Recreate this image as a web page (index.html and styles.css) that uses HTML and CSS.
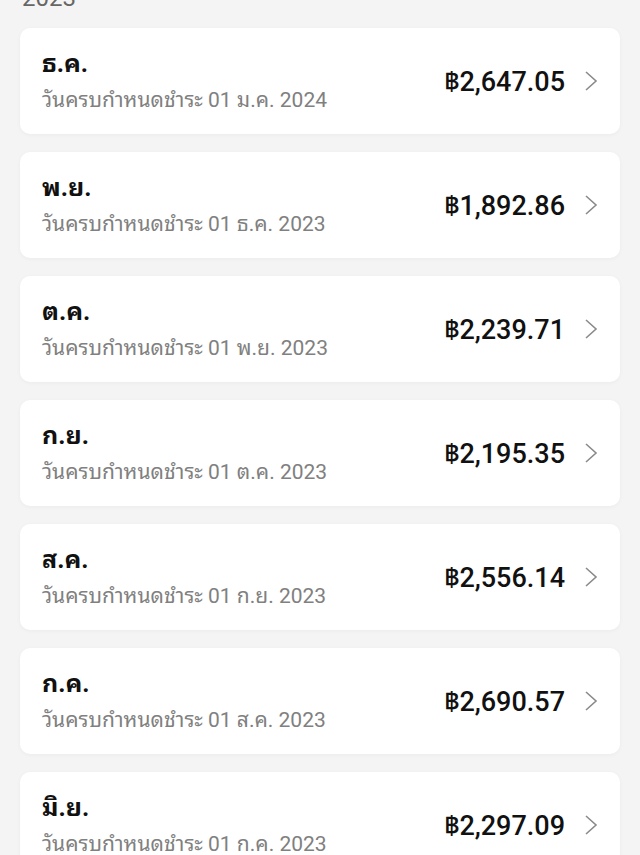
FILE: index.html
```html
<!DOCTYPE html>
<html lang="th">
<head>
<meta charset="utf-8">
<link rel="stylesheet" href="styles.css">
</head>
<body>
<div class="page">
  <div class="year">2023</div>
  <div class="list">
    <div class="card">
      <div class="info"><div class="month">ธ.ค.</div><div class="due">วันครบกำหนดชำระ 01 ม.ค. 2024</div></div>
      <div class="amount">฿2,647.05</div>
      <svg class="chev" viewBox="0 0 14 22" width="14" height="22"><path d="M2 2 L12 11 L2 20" fill="none" stroke="#8a8a8a" stroke-width="1.6"/></svg>
    </div>
    <div class="card">
      <div class="info"><div class="month">พ.ย.</div><div class="due">วันครบกำหนดชำระ 01 ธ.ค. 2023</div></div>
      <div class="amount">฿1,892.86</div>
      <svg class="chev" viewBox="0 0 14 22" width="14" height="22"><path d="M2 2 L12 11 L2 20" fill="none" stroke="#8a8a8a" stroke-width="1.6"/></svg>
    </div>
    <div class="card">
      <div class="info"><div class="month">ต.ค.</div><div class="due">วันครบกำหนดชำระ 01 พ.ย. 2023</div></div>
      <div class="amount">฿2,239.71</div>
      <svg class="chev" viewBox="0 0 14 22" width="14" height="22"><path d="M2 2 L12 11 L2 20" fill="none" stroke="#8a8a8a" stroke-width="1.6"/></svg>
    </div>
    <div class="card">
      <div class="info"><div class="month">ก.ย.</div><div class="due">วันครบกำหนดชำระ 01 ต.ค. 2023</div></div>
      <div class="amount">฿2,195.35</div>
      <svg class="chev" viewBox="0 0 14 22" width="14" height="22"><path d="M2 2 L12 11 L2 20" fill="none" stroke="#8a8a8a" stroke-width="1.6"/></svg>
    </div>
    <div class="card">
      <div class="info"><div class="month">ส.ค.</div><div class="due">วันครบกำหนดชำระ 01 ก.ย. 2023</div></div>
      <div class="amount">฿2,556.14</div>
      <svg class="chev" viewBox="0 0 14 22" width="14" height="22"><path d="M2 2 L12 11 L2 20" fill="none" stroke="#8a8a8a" stroke-width="1.6"/></svg>
    </div>
    <div class="card">
      <div class="info"><div class="month">ก.ค.</div><div class="due">วันครบกำหนดชำระ 01 ส.ค. 2023</div></div>
      <div class="amount">฿2,690.57</div>
      <svg class="chev" viewBox="0 0 14 22" width="14" height="22"><path d="M2 2 L12 11 L2 20" fill="none" stroke="#8a8a8a" stroke-width="1.6"/></svg>
    </div>
    <div class="card">
      <div class="info"><div class="month">มิ.ย.</div><div class="due">วันครบกำหนดชำระ 01 ก.ค. 2023</div></div>
      <div class="amount">฿2,297.09</div>
      <svg class="chev" viewBox="0 0 14 22" width="14" height="22"><path d="M2 2 L12 11 L2 20" fill="none" stroke="#8a8a8a" stroke-width="1.6"/></svg>
    </div>
  </div>
</div>
</body>
</html>
```
FILE: styles.css
```css
html, body { margin: 0; padding: 0; }
body {
  background: #f4f4f4;
  font-family: Roboto, "Noto Sans Thai Looped", "Noto Looped Thai", "Noto Sans Thai", "Noto Sans", sans-serif;
  color: #111;
  overflow: hidden;
  height: 855px;
}
.page {
  padding: 0 20px;
  margin-top: -16px;
}
.year {
  font-size: 24px;
  color: #666;
  line-height: 28px;
  padding-left: 2px;
}
.list {
  display: flex;
  flex-direction: column;
  gap: 18px;
  margin-top: 16px;
}
.card {
  background: #fff;
  border-radius: 10px;
  height: 106px;
  box-sizing: border-box;
  padding: 0 22px;
  display: flex;
  align-items: center;
  box-shadow: 0 1px 4px rgba(0,0,0,0.04);
}
.info { flex: 1; }
.month {
  font-size: 25px;
  font-weight: 700;
  line-height: 30px;
  color: #111;
}
.due {
  font-size: 21px;
  color: #808080;
  line-height: 28px;
  margin-top: 7px;
}
.amount {
  font-size: 27px;
  font-weight: 500;
  color: #111;
  margin-right: 19px;
  margin-bottom: 6px;
}
.chev { display: block; }
```
